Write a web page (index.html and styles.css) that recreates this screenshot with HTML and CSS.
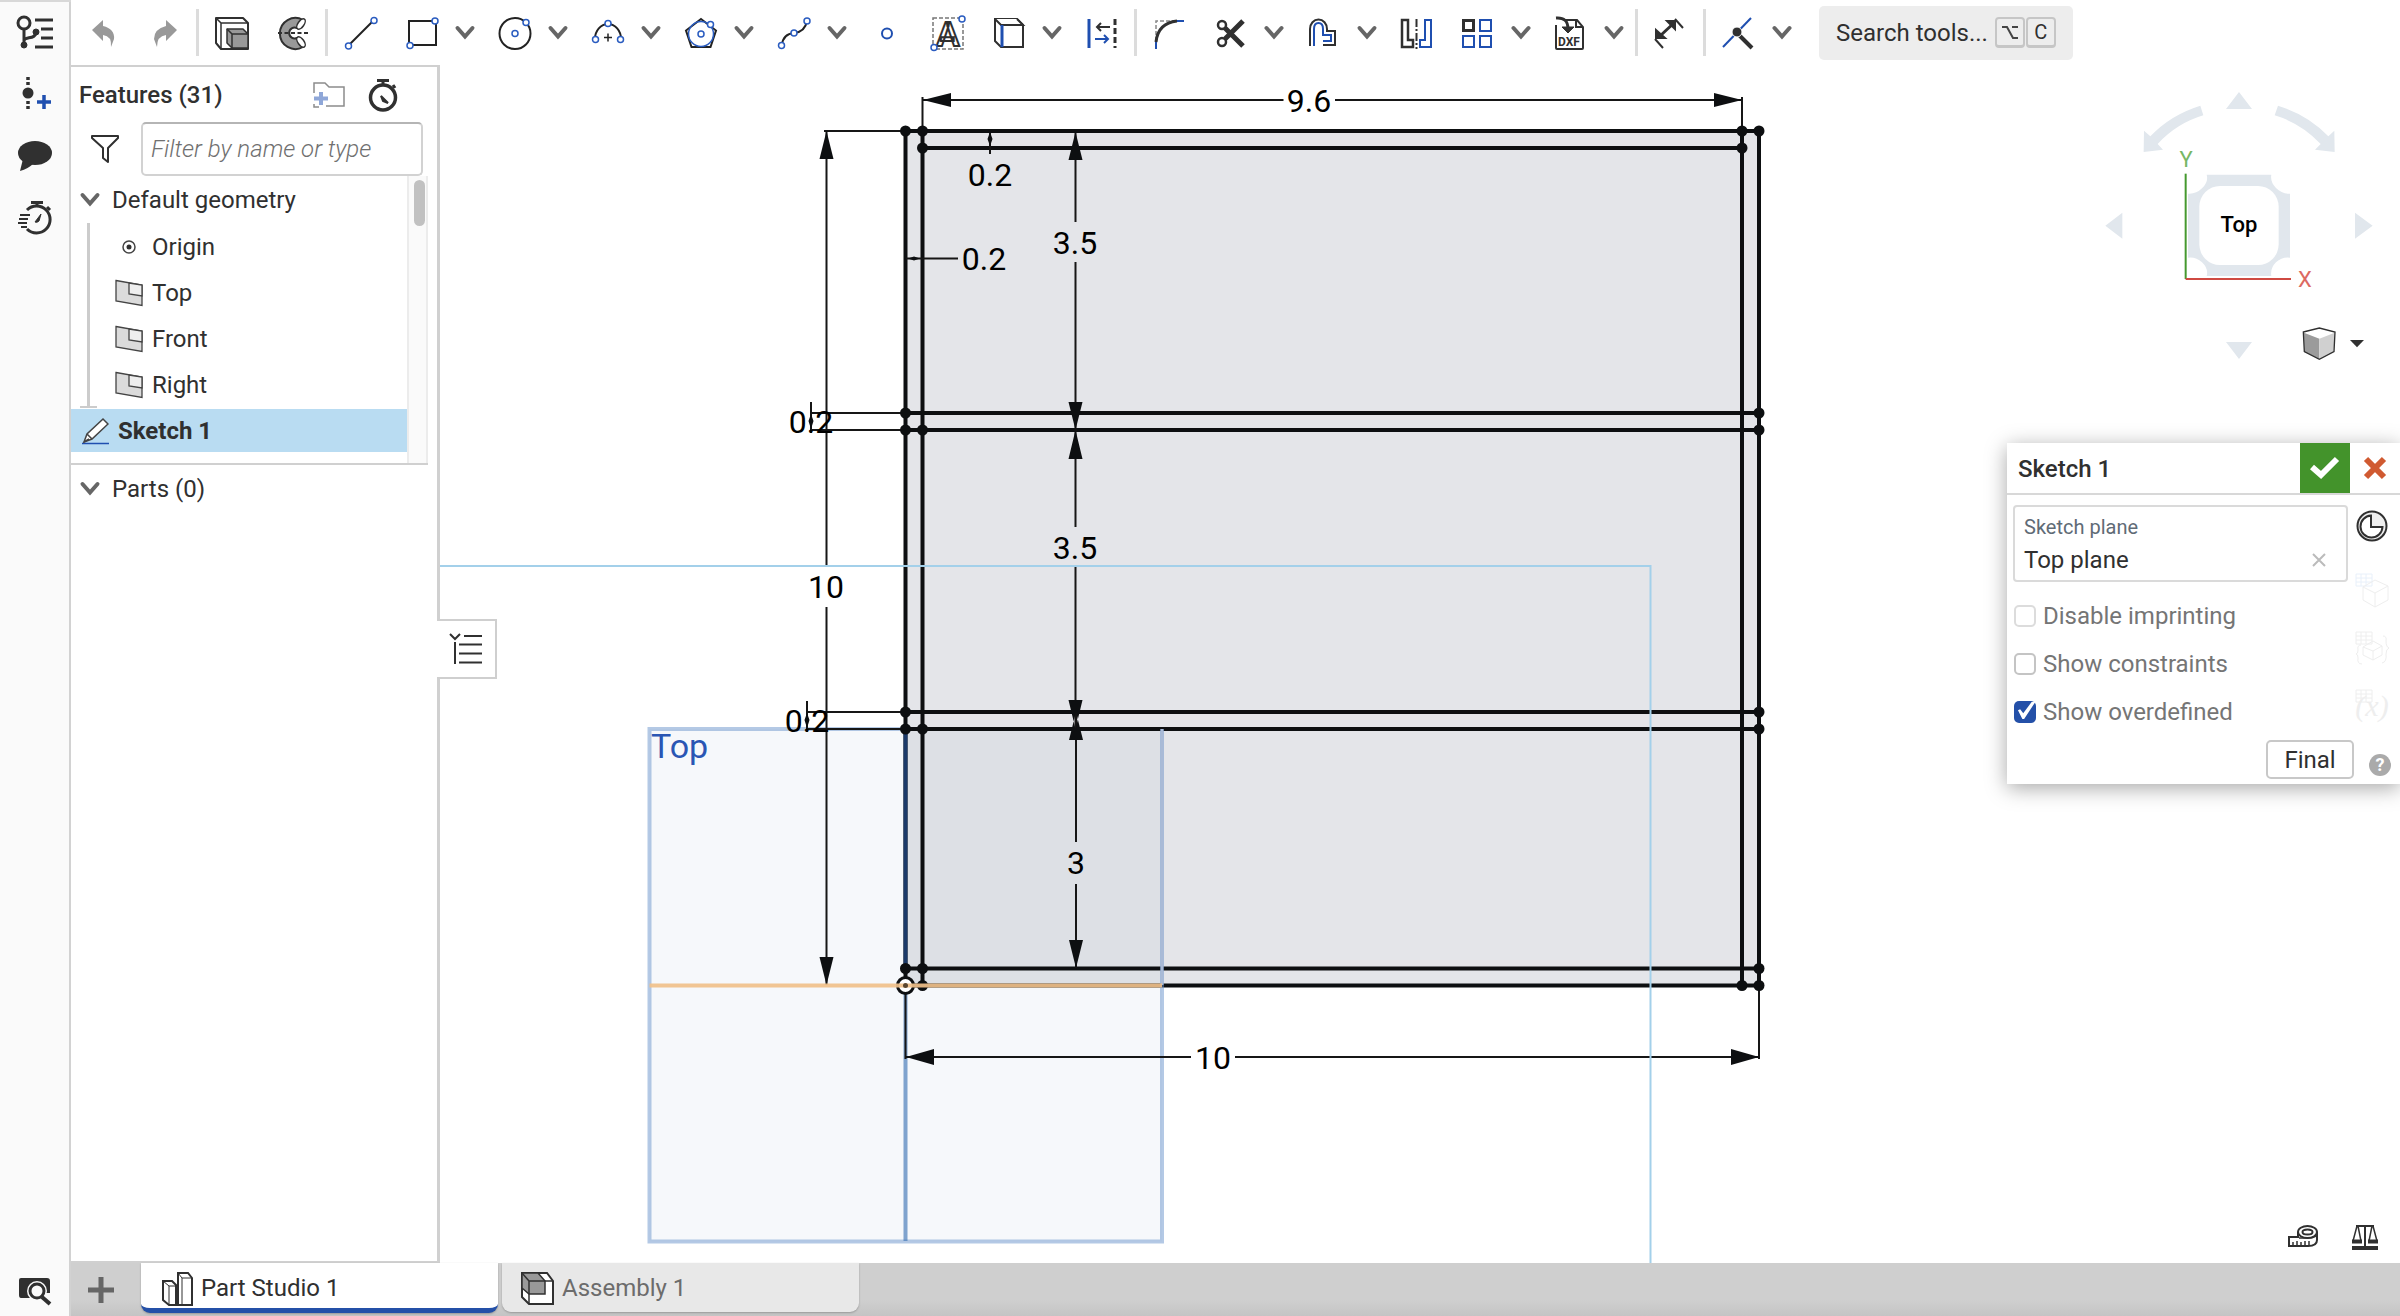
FILE: index.html
```html
<!DOCTYPE html>
<html lang="en">
<head>
<meta charset="utf-8">
<title>Part Studio 1</title>
<link rel="stylesheet" href="styles.css">
</head>
<body>
<svg class="defs" aria-hidden="true">
  <symbol id="chev" viewBox="0 0 26 20"><path d="M5.500 5l7.500 8.500L20.500 5" fill="none" stroke="#666" stroke-width="4" stroke-linecap="round"/></symbol>
  <symbol id="plane" viewBox="0 0 28 28"><path d="M1 1.500l26 4.500v20.500L1 22z" fill="#dbdbdb" stroke="#444" stroke-width="1.300"/><path d="M14 4v11l13 2V6z" fill="#eee" stroke="#444" stroke-width="1.300"/></symbol>
</svg>
<div class="app">
  <nav class="rail" aria-label="Document">
    <button class="rail-btn" aria-label="Feature list"><svg width="40" height="40" viewBox="0 0 40 40" fill="none" stroke="#303030" stroke-width="3"><circle cx="9" cy="11" r="6"/><path d="M9 17v17M9 29c0-5 12-1 12-9M20 8h18M26 17h12M26 26h12M20 35h18"/><circle cx="9" cy="33" r="3" fill="#303030" stroke-width="1"/><circle cx="21" cy="20" r="3" fill="#303030" stroke-width="1"/></svg></button>
    <button class="rail-btn" aria-label="Insert feature"><svg width="40" height="40" viewBox="0 0 40 40"><path d="M13 3v3M13 8v3M13 27v3M13 32v3" stroke="#303030" stroke-width="3.500"/><circle cx="13" cy="19" r="5.500" fill="#303030"/><path d="M29 21v14M22 28h14" stroke="#1f4fb0" stroke-width="3.500"/></svg></button>
    <button class="rail-btn" aria-label="Comments"><svg width="40" height="40" viewBox="0 0 40 40"><ellipse cx="20" cy="17" rx="17" ry="12" fill="#303030"/><path d="M8 23L5 35q8-2 14-8z" fill="#303030"/></svg></button>
    <button class="rail-btn" aria-label="History"><svg width="40" height="40" viewBox="0 0 40 40" fill="none" stroke="#303030"><path d="M12 12a13.500 13.500 0 1 1 0 19" stroke-width="3"/><path d="M16 4.500h12M22 4v5M32 9l3 3" stroke-width="3"/><path d="M5 17h10M4 21h9M3 25h9M6 29h6" stroke-width="2"/><path d="M20 24l6-8-2 7q-2 2-4 1z" fill="#303030" stroke-width="1"/></svg></button>
    <button class="rail-btn rail-last" aria-label="Search document"><svg width="40" height="40" viewBox="0 0 40 40"><path d="M6 7h26q3 0 3 3v12h-5a8 8 0 1 0-14 5H6q-2 0-2-3V9q0-2 2-2z" fill="#303030"/><circle cx="22" cy="20" r="10" fill="#fafafa"/><circle cx="22" cy="20" r="7" fill="none" stroke="#303030" stroke-width="3"/><path d="M27 26l8 7" stroke="#303030" stroke-width="4"/></svg></button>
  </nav>

  <div class="main">
    <header class="toolbar">
      <button class="tool" aria-label="Undo"><svg width="40" height="40" viewBox="0 0 40 40"><path d="M9 17L20 7v6q12 3 11 13l-3 8q1-11-8-12v6z" fill="#999"/></svg></button>
      <button class="tool" aria-label="Redo"><svg width="40" height="40" viewBox="0 0 40 40"><path d="M33 17L22 7v6q-12 3-12 13l3 8q0-11 9-12v6z" fill="#999"/></svg></button>
      <span class="sep"></span>
      <button class="tool" aria-label="Extrude"><svg width="40" height="40" viewBox="0 0 40 40" stroke="#303030" stroke-width="1.500" stroke-linejoin="round"><path d="M4 5h27l5 5v26H9l-5-6z" fill="#fff" stroke-width="2"/><path d="M4 5l5 5h27M9 10v26" fill="none"/><path d="M15 16h16l5 5v14H20l-5-5z" fill="#999"/><path d="M15 16l5 5h16M20 21v14" fill="none"/></svg></button>
      <button class="tool" aria-label="Revolve"><svg width="40" height="40" viewBox="0 0 40 40" stroke="#303030" stroke-width="1.500"><path d="M30 7A15.500 15.500 0 1 0 30 34L24 25A5.500 5.500 0 1 1 24 15z" fill="#999" stroke-width="2"/><ellipse cx="28" cy="11" rx="3" ry="6" fill="#fff" transform="rotate(35 28 11)"/><ellipse cx="28" cy="29" rx="3" ry="6" fill="#fff" transform="rotate(-35 28 29)"/><path d="M5 20h31" stroke-dasharray="4 2.500" stroke-width="2"/></svg></button>
      <span class="sep"></span>
      <button class="tool" aria-label="Line"><svg width="40" height="40" viewBox="0 0 40 40" fill="#fff"><path d="M7 33L32 8" stroke="#222" stroke-width="2"/><g stroke="#2a5cc0" stroke-width="1.500"><circle cx="33" cy="7.500" r="3"/><circle cx="7.500" cy="33" r="3"/></g></svg></button>
      <button class="tool" aria-label="Rectangle"><svg width="40" height="40" viewBox="0 0 40 40" fill="#fff"><path d="M7 8h27v24H7z" stroke="#222" stroke-width="2"/><g stroke="#2a5cc0" stroke-width="1.500"><circle cx="33" cy="8" r="3"/><circle cx="8" cy="32.500" r="3"/></g></svg></button>
      <button class="drop" aria-label="Rectangle options"><svg width="26" height="20"><use href="#chev"/></svg></button>
      <button class="tool" aria-label="Circle"><svg width="40" height="40" viewBox="0 0 40 40" fill="#fff"><circle cx="20" cy="20.500" r="15.500" stroke="#222" stroke-width="2"/><g stroke="#2a5cc0" stroke-width="1.500"><circle cx="31" cy="9.500" r="3"/><circle cx="20" cy="20.500" r="3"/></g></svg></button>
      <button class="drop" aria-label="Circle options"><svg width="26" height="20"><use href="#chev"/></svg></button>
      <button class="tool" aria-label="Arc"><svg width="40" height="40" viewBox="0 0 40 40" fill="#fff"><path d="M7 26a13 15 0 0 1 26 0" stroke="#222" stroke-width="2"/><path d="M20 20.500v8M16 24.500h8" stroke="#222" stroke-width="1.500"/><g stroke="#2a5cc0" stroke-width="1.500"><circle cx="20" cy="10.500" r="3"/><circle cx="7.500" cy="26.500" r="3"/><circle cx="32.500" cy="26.500" r="3"/></g></svg></button>
      <button class="drop" aria-label="Arc options"><svg width="26" height="20"><use href="#chev"/></svg></button>
      <button class="tool" aria-label="Polygon"><svg width="40" height="40" viewBox="0 0 40 40" fill="#fff"><path d="M20 6l15 11.500L29.500 34h-19L5 17.500z" stroke="#222" stroke-width="2"/><g stroke="#2a5cc0" stroke-width="1.500"><circle cx="20" cy="21" r="12.500" fill="none"/><circle cx="29.500" cy="11.500" r="3"/><circle cx="20" cy="21" r="3"/></g></svg></button>
      <button class="drop" aria-label="Polygon options"><svg width="26" height="20"><use href="#chev"/></svg></button>
      <button class="tool" aria-label="Spline"><svg width="40" height="40" viewBox="0 0 40 40" fill="#fff"><path d="M8 32q1-11 12-12t13-12" fill="none" stroke="#222" stroke-width="2"/><g stroke="#2a5cc0" stroke-width="1.500"><circle cx="33" cy="8" r="3"/><circle cx="20" cy="20" r="3"/><circle cx="7.500" cy="32.500" r="3"/></g></svg></button>
      <button class="drop" aria-label="Spline options"><svg width="26" height="20"><use href="#chev"/></svg></button>
      <button class="tool" aria-label="Point"><svg width="40" height="40" viewBox="0 0 40 40"><circle cx="20" cy="20.500" r="5" fill="#fff" stroke="#1f4fb0" stroke-width="2"/></svg></button>
      <button class="tool" aria-label="Text"><svg class="text-icon" width="40" height="40" viewBox="0 0 40 40" fill="#fff"><path d="M5 5h30v31H5z" stroke="#777" stroke-width="1.500" stroke-dasharray="4 2"/><text x="20" y="33" class="glyph-a">A</text><g stroke="#2a5cc0" stroke-width="1.500"><circle cx="34" cy="6" r="3"/><circle cx="6" cy="34.500" r="3"/></g></svg></button>
      <button class="tool" aria-label="Use"><svg width="40" height="40" viewBox="0 0 40 40" fill="#fff" stroke="#303030" stroke-width="2"><path d="M6 6h22l6 6v22H12l-6-6z"/><path d="M28 6l6 6H12L6 6"/><path d="M13 12v22" stroke="#1f4fb0" stroke-width="3"/></svg></button>
      <button class="drop" aria-label="Use options"><svg width="26" height="20"><use href="#chev"/></svg></button>
      <button class="tool" aria-label="Dimension"><svg width="40" height="40" viewBox="0 0 40 40" fill="none"><path d="M7 6v29" stroke="#1f4fb0" stroke-width="3"/><path d="M33 6v29" stroke="#303030" stroke-width="3" stroke-dasharray="6 3"/><path d="M28 14H15m4-4l-4 4 4 4" stroke="#303030" stroke-width="2"/><path d="M13 26h13m-4-4l4 4-4 4" stroke="#1f4fb0" stroke-width="2"/></svg></button>
      <span class="sep"></span>
      <button class="tool" aria-label="Fillet"><svg width="40" height="40" viewBox="0 0 40 40" fill="none"><path d="M6 28V8h20" stroke="#888" stroke-width="1.500" stroke-dasharray="4 2"/><path d="M6 36v-8M26 8h8" stroke="#1f4fb0" stroke-width="2"/><path d="M6 29Q8 10 27 8" stroke="#303030" stroke-width="3"/></svg></button>
      <button class="tool" aria-label="Trim"><svg width="40" height="40" viewBox="0 0 40 40" fill="none" stroke="#303030"><circle cx="11" cy="12" r="4" stroke-width="2.500"/><circle cx="11" cy="29" r="4" stroke-width="2.500"/><path d="M14 15L32 33M14 26L32 8" stroke-width="5"/></svg></button>
      <button class="drop" aria-label="Trim options"><svg width="26" height="20"><use href="#chev"/></svg></button>
      <button class="tool" aria-label="Offset"><svg width="40" height="40" viewBox="0 0 40 40" fill="none" stroke-width="2"><path d="M6 33V16a8.500 9.500 0 0 1 17 0v2h8v14H19" stroke="#303030"/><path d="M10 33V16q0-6 4.500-6T19 16v6h8v6h-8" stroke="#1f4fb0"/></svg></button>
      <button class="drop" aria-label="Offset options"><svg width="26" height="20"><use href="#chev"/></svg></button>
      <button class="tool" aria-label="Mirror"><svg width="40" height="40" viewBox="0 0 40 40" fill="none" stroke-width="2"><path d="M5 7h6v20h5v7H5z" stroke="#303030" stroke-width="2.500"/><path d="M19.500 6v30" stroke="#303030" stroke-dasharray="8 2 2 2"/><path d="M34 7h-6v20h-5v7h11z" stroke="#1f4fb0"/></svg></button>
      <button class="tool" aria-label="Pattern"><svg width="40" height="40" viewBox="0 0 40 40" fill="none" stroke="#1f4fb0" stroke-width="2"><path d="M5.500 7.500h10v10h-10z" stroke="#303030" stroke-width="3"/><path d="M22 7h11v11H22zM5 23h11v11H5zM22 23h11v11H22z"/></svg></button>
      <button class="drop" aria-label="Pattern options"><svg width="26" height="20"><use href="#chev"/></svg></button>
      <button class="tool" aria-label="Insert DXF"><svg width="40" height="40" viewBox="0 0 40 40" fill="none" stroke="#303030" stroke-width="2"><path d="M13 7h13l6 7v21q0 1-1 1H6q-1 0-1-1V12M25 7v7h7"/><path d="M5 5q12-1 12 11" stroke-width="3"/><path d="M11 14h12l-6 6z" fill="#303030" stroke-width="1"/><text x="18" y="33" class="glyph-dxf">DXF</text></svg></button>
      <button class="drop" aria-label="Insert options"><svg width="26" height="20"><use href="#chev"/></svg></button>
      <span class="sep"></span>
      <button class="tool" aria-label="Measure line"><svg width="40" height="40" viewBox="0 0 40 40" stroke="#303030" stroke-width="2"><path d="M24 6l8 9M4 26l8 9"/><path d="M9 23L24 9" stroke-width="3"/><path d="M16 8h8v8zM5 17v8h9z" fill="#303030"/></svg></button>
      <span class="sep"></span>
      <button class="tool" aria-label="Coincident"><svg width="40" height="40" viewBox="0 0 40 40"><path d="M4 34L32 5" stroke="#1f4fb0" stroke-width="2"/><path d="M17 19l16 16" stroke="#303030" stroke-width="4"/><circle cx="18" cy="19" r="5" fill="#303030" stroke="#fff" stroke-width="1"/></svg></button>
      <button class="drop" aria-label="Constraint options"><svg width="26" height="20"><use href="#chev"/></svg></button>
      <button class="search">Search tools...<span class="keys"><kbd><svg width="18" height="18" viewBox="0 0 18 18"><path d="M1 4h5l6 11h5M11 4h6" fill="none" stroke="#444" stroke-width="2"/></svg></kbd><kbd>C</kbd></span></button>
    </header>

    <div class="workspace">
      <aside class="panel">
        <div class="panel-head">
          <h2>Features (31)</h2>
          <button class="plain" aria-label="New folder"><svg width="34" height="34" viewBox="0 0 34 34" fill="none"><path d="M2 15V5h11l4 4h15v19H14M2 26v3h5" stroke="#8c8c8c" stroke-width="1.500"/><path d="M9 14v13M2 20.500h14" stroke="#8fa7d8" stroke-width="4"/></svg></button>
          <button class="plain" aria-label="Rebuild time"><svg width="34" height="34" viewBox="0 0 34 34" fill="none" stroke="#303030"><circle cx="17" cy="19.500" r="12.500" stroke-width="3.500"/><path d="M11 2.500h12M17 2v5M27 7l2 3" stroke-width="3"/><path d="M15 18l7 7-5-2z" stroke-width="2"/></svg></button>
        </div>
        <div class="panel-filter">
          <button class="plain" aria-label="Filter"><svg width="32" height="32" viewBox="0 0 32 32"><path d="M3 3h26v2L19 15v14l-5-4V15L3 5z" fill="#fff" stroke="#303030" stroke-width="2" stroke-linejoin="round"/></svg></button>
          <input type="text" placeholder="Filter by name or type" aria-label="Filter by name or type">
        </div>
        <div class="tree-wrap">
          <ul class="tree">
            <li class="row"><svg width="26" height="20"><use href="#chev"/></svg>Default geometry</li>
            <li class="branch"><ul>
              <li class="row sub"><svg width="28" height="28" viewBox="0 0 28 28"><circle cx="14" cy="14" r="6" fill="#fff" stroke="#444" stroke-width="1.500"/><circle cx="14" cy="14" r="2.500" fill="#303030"/></svg>Origin</li>
              <li class="row sub"><svg width="28" height="28"><use href="#plane"/></svg>Top</li>
              <li class="row sub"><svg width="28" height="28"><use href="#plane"/></svg>Front</li>
              <li class="row sub"><svg width="28" height="28"><use href="#plane"/></svg>Right</li>
            </ul></li>
            <li class="row active"><svg width="28" height="28" viewBox="0 0 28 28"><path d="M1 26.500h27" stroke="#1f4fb0" stroke-width="1.500"/><path d="M3 25l3-8L22 2l5 5-16 15z" fill="#fff" stroke="#444" stroke-width="1.500"/><path d="M6 17l5 5M3 25l5-3" stroke="#444" stroke-width="1.500"/></svg>Sketch 1</li>
          </ul>
          <div class="track"><div class="thumb"></div></div>
        </div>
        <div class="row parts"><svg width="26" height="20"><use href="#chev"/></svg>Parts (0)</div>
      </aside>

      <section class="viewport" aria-label="Graphics area">
        <svg class="scene" viewBox="440 65 1960 1198" preserveAspectRatio="xMinYMin meet">
          <rect x="649.500" y="729" width="512.500" height="512.500" fill="#f6f8fb"/>
          <rect x="905.500" y="131" width="853.500" height="854.500" fill="#e4e5e9"/>
          <rect x="905.500" y="729" width="256.500" height="256.500" fill="#dde0e5"/>
          <g fill="none" stroke="#0d0f11" stroke-width="4">
            <rect x="905.500" y="131" width="853.500" height="854.500"/>
            <path d="M922.500 131v854M1742 131v854M922.500 148H1742M905.500 413H1759M905.500 430H1759M905.500 712H1759M905.500 729H1759M905.500 968.500H1759"/>
          </g>
          <g fill="none" stroke="#6a93cc" stroke-opacity=".5" stroke-width="4"><path d="M905.500 729H649.500v512.500H1162V729"/><path d="M905.500 985v256" stroke="#3f74b5" stroke-opacity=".65"/></g>
          <path d="M905.500 731v238" stroke="#1c3a69" stroke-width="4"/>
          <path d="M1162 729v256" stroke="#a9bad6" stroke-width="3"/>
          <g class="dim">
            <path d="M922.500 97v34M1742 97v34M923 100h360.500M1335 100h407"/>
            <path d="M824 131h81M826.500 131v435M826.500 607v378"/>
            <path d="M990 133v21M906 258.500h52M1075.500 133v89M1075.500 262v168M1075.500 430v97M1075.500 567v162M1076 712v130M1076 884v84"/>
            <path d="M811 413h94M811 430h94M811 402v31M807 712h98M807 729h98M807 701v31"/>
            <path d="M905.500 985v74M1759 985v74M906 1057h285M1235 1057h524"/>
          </g>
          <g fill="#0d0f11">
            <path d="M923 100l28-7v14zM1742 100l-28-7v14zM826.500 131l-7 28h14zM826.500 985l-7-28h14z"/>
            <path d="M1075.500 132l-7 28h14zM1075.500 430l-7-28h14zM1075.500 430l-7 29h14zM1075.500 729l-7-29h14zM1076 712l-7 28h14zM1076 968l-7-28h14z"/>
            <path d="M906 1057l28-8v16zM1759 1057l-28-8v16z"/>
            <path d="M990 132l2.500 7-2.500 7-2.500-7zM908 258.500l6-2 6 2-6 2zM811 414l2.500 7-2.500 8-2.500-8zM807 713l2.500 7-2.500 8-2.500-8z"/>
            <circle cx="905.500" cy="131" r="5.500"/><circle cx="922.500" cy="131" r="5.500"/><circle cx="922.500" cy="148" r="5.500"/>
            <circle cx="1742" cy="131" r="5.500"/><circle cx="1742" cy="148" r="5.500"/><circle cx="1759" cy="131" r="5.500"/>
            <circle cx="905.500" cy="413" r="5.500"/><circle cx="905.500" cy="430" r="5.500"/><circle cx="922.500" cy="430" r="5.500"/>
            <circle cx="1759" cy="413" r="5.500"/><circle cx="1759" cy="430" r="5.500"/>
            <circle cx="905.500" cy="712" r="5.500"/><circle cx="905.500" cy="729" r="5.500"/><circle cx="922.500" cy="729" r="5.500"/>
            <circle cx="1759" cy="712" r="5.500"/><circle cx="1759" cy="729" r="5.500"/>
            <circle cx="905.500" cy="968.500" r="5.500"/><circle cx="922.500" cy="968.500" r="5.500"/><circle cx="922.500" cy="985.500" r="5.500"/>
            <circle cx="1759" cy="968.500" r="5.500"/><circle cx="1742" cy="985.500" r="5.500"/><circle cx="1759" cy="985.500" r="5.500"/>
          </g>
          <circle cx="905.500" cy="985.500" r="8" fill="#fff" stroke="#0d0f11" stroke-width="3"/>
          <path d="M649.500 985.500H1162" stroke="#f0c08a" stroke-opacity=".92" stroke-width="4"/>
          <circle cx="905.500" cy="985.500" r="2.500" fill="#5a4630"/>
          <path d="M440 566h1210.500v697" fill="none" stroke="#a3d0ea" stroke-width="2"/>
          <g class="dim-text">
            <text x="1309" y="112">9.6</text><text x="990" y="186">0.2</text><text x="984" y="270">0.2</text>
            <text x="1075" y="254">3.5</text><text x="811" y="433">0.2</text><text x="1075" y="559">3.5</text>
            <text x="826" y="598">10</text><text x="807" y="732">0.2</text><text x="1076" y="874">3</text><text x="1213" y="1069">10</text>
          </g>
          <text class="plane-label" x="651" y="758">Top</text>
        </svg>

        <button class="collapse" aria-label="Collapse feature list"><svg width="36" height="36" viewBox="0 0 36 36" fill="none" stroke="#303030" stroke-width="2"><path d="M2 3l5 5 5-5M7 11v22M16 5h18M11 13.500h23M11 22.500h23M11 31.500h23"/></svg></button>

        <svg class="cube" width="320" height="310" viewBox="0 0 320 310" role="img" aria-label="View cube">
          <g transform="scale(.33333)" fill="#e1e7ed">
            <path d="M477 66l39 51h-78zM477 867l39-51h-78zM76 467l51-39v78zM878 467l-53-39v78z"/>
            <path d="M361 107l9 29q-80 24-137 86l16 17-58 7 1-64 19 17q60-64 150-92zM594 107l-10 29q80 24 138 86l-17 17 59 7-1-64-18 17q-60-64-151-92z"/>
            <path d="M380 314h194q-4 22 14 40 18 18 42 17v192q-24-3-42 14-18 18-14 41H380q6-22-14-41-18-17-42-14V371q24 2 42-16 20-20 14-41z"/>
            <rect x="358" y="348" width="238" height="237" rx="62" fill="#fff"/>
            <path d="M317 311v316" stroke="#45992f" stroke-width="6"/><path d="M317 627h316" stroke="#cf4a42" stroke-width="6"/>
            <path d="M670 786l48-12 47 12-4 60-43 22-46-22z" fill="#fff"/><path d="M672 788l46 18v62l-45-22z" fill="#9b9b9b"/><path d="M764 788l-46 18v62l43-22z" fill="#d0d0d0"/>
            <path d="M670 786l48-12 47 12-3 59-44 23-45-23z" fill="none" stroke="#303030" stroke-width="4"/><path d="M810 810h42l-21 22z" fill="#303030"/>
          </g>
          <text x="159" y="162" class="face">Top</text><text x="106" y="97" class="axis-y">Y</text><text x="225" y="217" class="axis-x">X</text>
        </svg>

        <form class="dialog" aria-label="Sketch 1">
          <div class="dialog-head">
            <h2>Sketch 1</h2>
            <button type="button" class="ok" aria-label="Accept"><svg width="32" height="26" viewBox="0 0 32 26"><path d="M3 12l9 8L28 4" fill="none" stroke="#fff" stroke-width="6"/></svg></button>
            <button type="button" class="cancel" aria-label="Cancel"><svg width="24" height="24" viewBox="0 0 24 24"><path d="M3 3l18 18M21 3L3 21" stroke="#d05a31" stroke-width="6"/></svg></button>
          </div>
          <div class="dialog-body">
            <div class="fields">
              <div class="plane-box">
                <span class="plane-title">Sketch plane</span>
                <span class="plane-value">Top plane<button type="button" class="plain" aria-label="Remove"><svg width="16" height="16" viewBox="0 0 16 16"><path d="M2 2l12 12M14 2L2 14" stroke="#bbb" stroke-width="2"/></svg></button></span>
              </div>
              <label class="check dim-check"><input type="checkbox">Disable imprinting</label>
              <label class="check"><input type="checkbox">Show constraints</label>
              <label class="check"><input type="checkbox" checked>Show overdefined</label>
              <button type="button" class="final">Final</button>
            </div>
            <div class="side">
              <button type="button" class="plain clock" aria-label="Simulation"><svg width="34" height="34" viewBox="0 0 34 34" fill="none" stroke="#303030"><circle cx="17" cy="17" r="14.500" stroke-width="2" fill="#eee"/><path d="M16 6.500A11 11 0 1 0 27.500 18H16z" fill="#fff" stroke-width="2"/></svg></button>
              <svg class="ghost" width="36" height="36" viewBox="0 0 36 36" fill="none" stroke="#eee"><path d="M2 2h16v12H2zM2 6h16M2 10h16M7 2v12M12 2v12" stroke="#e8f0fa"/><path d="M9 15l12-7 13 6v14l-13 7-12-7zM9 15l12 6 13-7M21 21v14"/></svg>
              <svg class="ghost" width="36" height="36" viewBox="0 0 36 36" fill="none" stroke="#eee"><path d="M2 2h16v12H2zM2 6h16M2 10h16M7 2v12M12 2v12"/><path d="M9 17l10-6 9 5v9l-9 5-10-5zM9 17l10 4 9-5M19 21v9M7 15q-4 0-3 5 0 4-2 4 2 0 2 4-1 6 4 6M29 6q4 0 3 5 0 6 3 7-3 1-3 6 1 8-4 9"/></svg>
              <svg class="ghost" width="36" height="36" viewBox="0 0 36 36" fill="none" stroke="#eee"><path d="M2 2h16v12H2zM2 6h16M2 10h16M7 2v12M12 2v12"/><text x="18" y="28" class="ghost-x">(x)</text></svg>
              <button type="button" class="help" aria-label="Help">?</button>
            </div>
          </div>
        </form>

        <div class="corner">
          <button class="plain" aria-label="Measure"><svg width="32" height="26" viewBox="0 0 32 26" fill="none" stroke="#303030" stroke-width="2"><path d="M11 8v5H2v9h19q9 0 9-6V8"/><ellipse cx="20.500" cy="8" rx="9.500" ry="6"/><ellipse cx="20.500" cy="8" rx="5" ry="2.500"/><path d="M30 9q0 5-9 5H12M6 21v-3M10 21v-4M14 21v-3M18 21v-4M22 21v-4" stroke-width="1.500"/></svg></button>
          <button class="plain" aria-label="Mass properties"><svg width="28" height="28" viewBox="0 0 28 28" fill="none" stroke="#303030"><path d="M5 3h18M14 3v20" stroke-width="2"/><path d="M6 3L2 18h8L7 3M21 3l-3 15h8L22 3" stroke-width="1.500"/><path d="M1 18.500h10M17 18.500h10M1 25h26" stroke-width="4"/></svg></button>
        </div>
      </section>
    </div>

    <footer class="tabs">
      <button class="add" aria-label="Add tab"><svg width="28" height="28" viewBox="0 0 28 28"><path d="M14 1v26M1 14h26" stroke="#666" stroke-width="5"/></svg></button>
      <button class="tab current"><svg width="32" height="36" viewBox="0 0 32 36" fill="#fff" stroke="#303030" stroke-width="2"><path d="M16 3h10l4 5v27H16zM1 11h9l4 4v20H7l-6-5z"/><path d="M1 11l6 5h7M7 16v19M16 3l4 5h10M20 8v27" fill="none" stroke-width="1"/></svg>Part Studio 1</button>
      <button class="tab"><svg width="34" height="36" viewBox="0 0 34 36" fill="#fff" stroke="#303030" stroke-width="2"><path d="M1 3h25l6 8v23H8l-7-7z"/><path d="M1 3h16l7 8v13H8l-7-6z" fill="#999" stroke-width="1.500"/><path d="M1 3l7 8h24M8 11v23" fill="none" stroke-width="1.500"/></svg>Assembly 1</button>
    </footer>
  </div>
</div>
</body>
</html>
```
FILE: styles.css
```css
* { box-sizing: border-box; }
body { margin: 0; font-family: Roboto, "Liberation Sans", sans-serif; font-size: 24px; color: #303030; background: #fff; }
button, input { font: inherit; color: inherit; margin: 0; }
button { border: 0; padding: 0; background: none; cursor: pointer; }
ul { list-style: none; margin: 0; padding: 0; }
h2 { margin: 0; font-size: 24px; font-weight: 500; }
svg { display: block; flex: none; }
.defs { position: absolute; width: 0; height: 0; }

.app { display: flex; min-height: 100vh; border-top: 2px solid #d8d8d8; }
.rail { width: 71px; flex: none; display: flex; flex-direction: column; align-items: center; gap: 22px; padding-top: 10px; background: #fafafa; border-right: 2px solid #d2d2d2; }
.rail-btn { height: 40px; }
.rail-last { margin-top: auto; padding-bottom: 4px; height: 46px; }
.main { flex: 1; min-width: 0; display: flex; flex-direction: column; margin-top: -2px; }

.toolbar { display: flex; align-items: center; height: 65px; padding-left: 1px; background: #fff; }
.tool { width: 61px; height: 64px; display: flex; align-items: center; justify-content: center; }
.drop { width: 32px; height: 64px; display: flex; align-items: center; }
.sep { width: 3px; height: 47px; margin: 0 2px; background: #dcdcdc; }
.text-icon { overflow: visible; }
.glyph-a { font-size: 34px; font-weight: 700; text-anchor: middle; stroke: #303030; stroke-width: 2px; fill: #fff; }
.glyph-dxf { font-size: 12px; font-weight: 700; text-anchor: middle; fill: #303030; stroke: none; }
.search { display: flex; align-items: center; gap: 7px; height: 54px; margin-left: 18px; padding: 0 17px; background: #ededed; border-radius: 5px; }
.keys { display: flex; gap: 1px; }
kbd { display: flex; align-items: center; justify-content: center; width: 30px; height: 31px; font: inherit; font-size: 20px; border: 2px solid #c6c6c6; border-bottom-width: 3px; border-radius: 4px; }

.workspace { flex: 1; display: flex; min-height: 0; }
.panel { width: 369px; flex: none; border: solid #d0d0d0; border-width: 2px 3px 2px 0; background: #fff; }
.panel-head { display: flex; align-items: center; height: 55px; padding: 0 37px 0 8px; gap: 20px; }
.panel-head h2 { margin-right: auto; }
.panel-filter { display: flex; align-items: center; gap: 20px; padding: 0 14px 0 18px; }
.panel-filter input { flex: 1; min-width: 0; height: 54px; padding: 0 8px; border: 2px solid #d2d2d2; border-top-color: #b5b5b5; border-radius: 5px; background: #fff; }
.panel-filter input::placeholder { color: #707070; font-style: italic; font-weight: 300; opacity: 1; }
.tree-wrap { display: flex; height: 289px; margin-right: 9px; border-bottom: 2px solid #d0d0d0; overflow: hidden; }
.tree { flex: 1; padding-top: 1px; }
.track { width: 21px; padding: 4px 5px; border: solid #ececec; border-width: 0 2px; background: #fafafa; }
.thumb { width: 11px; height: 46px; border-radius: 6px; background: #c1c1c1; }
.row { display: flex; align-items: center; height: 46px; gap: 9px; padding-left: 6px; }
.branch { position: relative; padding-top: 1px; }
.branch::before { content: ""; position: absolute; left: 16px; top: 0; bottom: 0; width: 3px; background: #ccc; }
.branch::after { content: ""; position: absolute; left: 9px; bottom: 0; width: 17px; height: 2px; background: #ccc; }
.sub { padding-left: 44px; }
.active { height: 43px; margin-top: 1px; padding-left: 10px; background: #b9dcf2; font-weight: 700; }
.parts { height: 48px; }

.viewport { flex: 1; min-width: 0; position: relative; }
.scene { width: 100%; height: auto; }
.dim { fill: none; stroke: #161616; stroke-width: 2px; }
.dim-text { font-size: 32px; text-anchor: middle; fill: #000; }
.plane-label { font-size: 34px; fill: #2a56b4; }
.collapse { position: absolute; left: -3px; top: 554px; width: 60px; height: 60px; display: flex; align-items: center; justify-content: center; background: #fff; border: 2px solid #cfcfcf; border-left: 0; }
.cube { position: absolute; right: 0; top: 5px; }
.face { font-size: 22px; font-weight: 500; text-anchor: middle; fill: #000; }
.axis-y { font-size: 22px; text-anchor: middle; fill: #77b765; }
.axis-x { font-size: 22px; text-anchor: middle; fill: #dc6a62; }

.dialog { position: absolute; right: 0; top: 378px; width: 393px; background: #fff; box-shadow: 0 4px 20px rgba(0, 0, 0, .35); }
.dialog-head { display: flex; height: 52px; border-bottom: 2px solid #d8d8d8; }
.dialog-head h2 { flex: 1; padding: 0 11px; line-height: 52px; }
.ok, .cancel { width: 50px; display: flex; align-items: center; justify-content: center; }
.ok { background: #43932b; }
.dialog-body { display: flex; padding: 10px 0 5px 6px; }
.fields { width: 335px; display: flex; flex-direction: column; }
.plane-box { display: flex; flex-direction: column; height: 77px; margin-bottom: 10px; padding: 7px 19px 0 9px; border: 2px solid #dadada; border-radius: 4px; }
.plane-title { font-size: 20px; line-height: 26px; color: #5f6b76; }
.plane-value { display: flex; align-items: center; justify-content: space-between; line-height: 40px; }
.check { display: flex; align-items: center; gap: 7px; height: 48px; padding-left: 1px; color: #757575; }
.check input { appearance: none; width: 22px; height: 22px; border: 2px solid #c4c4c4; border-radius: 5px; background: #fff; }
.dim-check input { border-color: #dcdcdc; }
.check input:checked { border: 0; background: #2450a8; }
.check input:checked::before { content: ""; display: block; width: 22px; height: 22px; background: #fff; clip-path: polygon(18% 42%, 28% 38%, 42% 56%, 80% 4%, 100% 0, 46% 82%, 38% 82%); }
.final { align-self: flex-end; width: 88px; height: 39px; margin: 4px -6px 0 0; border: 2px solid #c8c8c8; border-radius: 5px; background: #fff; }
.side { flex: 1; display: flex; flex-direction: column; align-items: center; gap: 22px; padding: 4px 4px 0 0; }
.clock { margin-bottom: 7px; }
.help { width: 22px; height: 22px; margin: 8px 0 0 16px; border-radius: 50%; background: #aaa; color: #fff; font-size: 18px; font-weight: 700; line-height: 22px; }
.ghost-x { font-family: "Liberation Serif", serif; font-style: italic; font-size: 30px; text-anchor: middle; fill: #eee; stroke: none; }
.corner { position: absolute; right: 21px; bottom: 12px; display: flex; align-items: center; gap: 32px; }

.tabs { display: flex; gap: 4px; height: 53px; background: linear-gradient(#cfcfcf 70%, #c4c4c4); }
.add { width: 66px; display: flex; align-items: center; justify-content: center; padding-right: 6px; }
.tab { display: flex; align-items: center; gap: 7px; width: 357px; height: 49px; padding: 0 0 0 19px; background: #e8e8e8; color: #6c6c6c; border-radius: 0 0 9px 9px; box-shadow: 0 1px 2px #999; }
.current { height: 50px; padding: 4px 0 0 21px; background: #fff; color: #303030; border-bottom: 5px solid #2450a8; }
```
